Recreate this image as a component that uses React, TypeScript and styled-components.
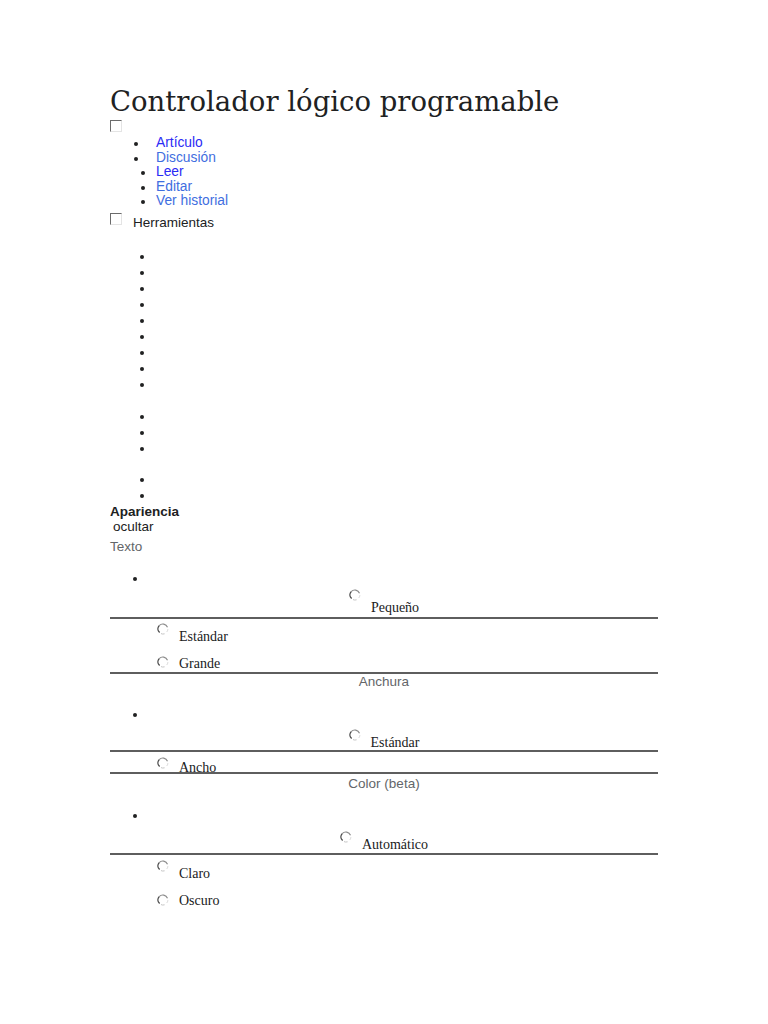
import React from 'react'
import styled, { createGlobalStyle } from 'styled-components'

const Global = createGlobalStyle`
  html, body {
    margin: 0;
    padding: 0;
    background: #ffffff;
  }
  body {
    font-family: "Liberation Sans", Arial, sans-serif;
    color: #202122;
  }
`

const Page = styled.div`
  width: 548px;
  padding: 81px 0 100px 110px;
  display: flex;
  flex-direction: column;
`

const Title = styled.h1`
  margin: 0;
  font-family: "DejaVu Serif", serif;
  font-weight: normal;
  font-size: 27.5px;
  line-height: 40px;
  height: 39px;
  color: #202122;
`

const Check = styled.span`
  display: inline-block;
  box-sizing: border-box;
  width: 12px;
  height: 12px;
  border-top: 1px solid #6b6b6b;
  border-left: 1px solid #6b6b6b;
  border-right: 1px solid #e4e4e4;
  border-bottom: 1px solid #e4e4e4;
  flex: none;
`

const CheckRow = styled.div<{ $h: number; $top: number; $drop: number }>`
  display: flex;
  align-items: flex-start;
  height: ${p => p.$h}px;
  margin-top: ${p => p.$top}px;
  ${Check} {
    margin-top: ${p => p.$drop}px;
  }
`

const ToolsLabel = styled.span`
  margin: 5px 0 0 11px;
  font-size: 13.5px;
  line-height: 16px;
  color: #202122;
`

const NavList = styled.ul<{ $dot: number }>`
  margin: 0;
  padding: 0 0 0 46px;
  list-style: none;
  --dot: ${p => p.$dot}px;
`

const NavItem = styled.li<{ $active?: boolean }>`
  position: relative;
  font-size: 13.8px;
  line-height: 14.5px;
  height: 14.5px;
  color: ${p => (p.$active ? '#2b2bf5' : '#3f6ee0')};
  &::before {
    content: '';
    position: absolute;
    left: var(--dot);
    top: 6px;
    width: 4px;
    height: 4px;
    border-radius: 50%;
    background: #202122;
  }
`

const DotList = styled.ul<{ $top: number }>`
  margin: ${p => p.$top}px 0 0;
  padding: 0;
  list-style: none;
`

const Dot = styled.li<{ $x?: number }>`
  position: relative;
  height: 16px;
  &::before {
    content: '';
    position: absolute;
    left: ${p => p.$x ?? 30}px;
    top: 6px;
    width: 4px;
    height: 4px;
    border-radius: 50%;
    background: #202122;
  }
`

const Heading = styled.div`
  font-weight: bold;
  font-size: 13.5px;
  line-height: 15px;
  color: #202122;
`

const HideLink = styled.div`
  font-size: 13.5px;
  line-height: 15px;
  padding-left: 3px;
  color: #202122;
`

const Label = styled.div<{ $top: number; $center?: boolean }>`
  margin-top: ${p => p.$top}px;
  font-size: 13.5px;
  line-height: 15px;
  color: #636669;
  text-align: ${p => (p.$center ? 'center' : 'left')};
`

const Choice = styled.label<{ $top: number; $center?: boolean; $drop: number; $h: number }>`
  display: flex;
  align-items: flex-start;
  justify-content: ${p => (p.$center ? 'center' : 'flex-start')};
  padding-left: ${p => (p.$center ? '0' : '47px')};
  margin-top: ${p => p.$top}px;
  height: ${p => p.$h}px;
  svg {
    margin-top: 1px;
  }
  span {
    margin-top: ${p => p.$drop}px;
  }
`

const ChoiceText = styled.span`
  margin-left: 10px;
  font-family: "Liberation Serif", "Times New Roman", serif;
  font-size: 14px;
  line-height: 16px;
  color: #202122;
`

const Rule = styled.hr`
  margin: 0;
  border: none;
  height: 2px;
  background: #5e5e5e;
`

function Radio() {
  return (
    <svg width="12" height="12" viewBox="0 0 12 12" style={{ flex: 'none' }}>
      <path d="M10.5 4.2 A5 5 0 0 0 2.2 2.6" fill="none" stroke="#8a8a8a" strokeWidth="1.1" />
      <path d="M2.2 2.6 A5 5 0 0 0 2.6 9.6" fill="none" stroke="#4a4a4a" strokeWidth="1.4" />
      <path d="M4 10.6 A5 5 0 0 0 7.6 10.8" fill="none" stroke="#c4c4c4" strokeWidth="1" />
      <path d="M9.8 8.9 A5 5 0 0 0 10.9 6.2" fill="none" stroke="#d6d6d6" strokeWidth="1" />
    </svg>
  )
}

type Opt = { text: string; top: number; h: number; drop: number; center?: boolean }

function Option({ text, top, h, drop, center }: Opt) {
  return (
    <Choice $top={top} $h={h} $drop={drop} $center={center}>
      <Radio />
      <ChoiceText>{text}</ChoiceText>
    </Choice>
  )
}

export default function App() {
  return (
    <>
      <Global />
      <Page>
        <Title>Controlador lógico programable</Title>
        <CheckRow $h={16} $top={0} $drop={0}>
          <Check />
        </CheckRow>
        <NavList $dot={-22}>
          <NavItem $active>Artículo</NavItem>
          <NavItem>Discusión</NavItem>
        </NavList>
        <NavList $dot={-15}>
          <NavItem $active>Leer</NavItem>
          <NavItem>Editar</NavItem>
          <NavItem>Ver historial</NavItem>
        </NavList>
        <CheckRow $h={21} $top={1} $drop={3}>
          <Check />
          <ToolsLabel>Herramientas</ToolsLabel>
        </CheckRow>
        <DotList $top={18}>
          {Array.from({ length: 9 }, (_, i) => <Dot key={i} />)}
        </DotList>
        <DotList $top={16}>
          {Array.from({ length: 3 }, (_, i) => <Dot key={i} />)}
        </DotList>
        <DotList $top={15}>
          {Array.from({ length: 2 }, (_, i) => <Dot key={i} />)}
        </DotList>
        <Heading>Apariencia</Heading>
        <HideLink>ocultar</HideLink>
        <Label $top={5}>Texto</Label>
        <DotList $top={17}>
          <Dot $x={23} />
        </DotList>
        <Option text="Pequeño" top={1} h={29} drop={12} center />
        <Rule />
        <Option text="Estándar" top={3} h={26} drop={7} />
        <Option text="Grande" top={7} h={17} drop={1} />
        <Rule />
        <Label $top={0} $center>Anchura</Label>
        <DotList $top={18}>
          <Dot $x={23} />
        </DotList>
        <Option text="Estándar" top={5} h={22} drop={7} center />
        <Rule />
        <Option text="Ancho" top={4} h={16} drop={4} />
        <Rule />
        <Label $top={2} $center>Color (beta)</Label>
        <DotList $top={17}>
          <Dot $x={23} />
        </DotList>
        <Option text="Automático" top={6} h={23} drop={7} center />
        <Rule />
        <Option text="Claro" top={4} h={23} drop={7} />
        <Option text="Oscuro" top={11} h={16} drop={0} />
      </Page>
    </>
  )
}
